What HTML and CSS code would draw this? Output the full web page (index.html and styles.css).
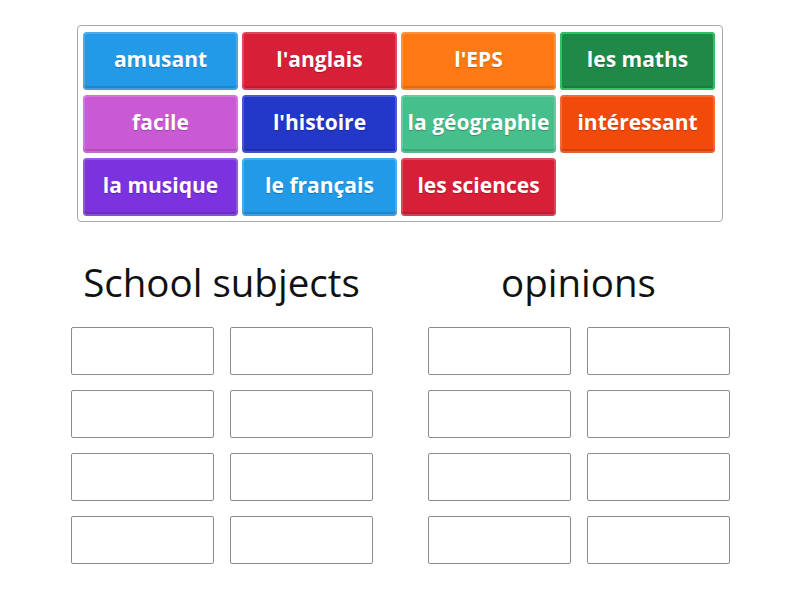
FILE: index.html
```html
<!DOCTYPE html>
<html>
<head>
  <title>Group sort</title>
  <link rel="stylesheet" href="styles.css">
</head>
<body>
  <div class="cards">
    <div class="card blue">amusant</div>
    <div class="card red">l'anglais</div>
    <div class="card orange">l'EPS</div>
    <div class="card green">les maths</div>
    <div class="card pink">facile</div>
    <div class="card navy">l'histoire</div>
    <div class="card mint">la géographie</div>
    <div class="card tomato">intéressant</div>
    <div class="card purple">la musique</div>
    <div class="card blue">le français</div>
    <div class="card red">les sciences</div>
  </div>

  <div class="groups">
    <div class="group">
      <h2>School subjects</h2>
      <div class="slots">
        <div class="slot"></div><div class="slot"></div>
        <div class="slot"></div><div class="slot"></div>
        <div class="slot"></div><div class="slot"></div>
        <div class="slot"></div><div class="slot"></div>
      </div>
    </div>
    <div class="group">
      <h2>opinions</h2>
      <div class="slots">
        <div class="slot"></div><div class="slot"></div>
        <div class="slot"></div><div class="slot"></div>
        <div class="slot"></div><div class="slot"></div>
        <div class="slot"></div><div class="slot"></div>
      </div>
    </div>
  </div>
</body>
</html>
```

FILE: styles.css
```css
body {
  margin: 0;
  background: #fff;
  font-family: "Open Sans", Arial, sans-serif;
}

.cards {
  box-sizing: border-box;
  width: 646px;
  height: 197px;
  margin: 25px auto 0;
  padding: 6px 5px 5px 5px;
  border: 1px solid #a8a8a8;
  border-radius: 4px;
  display: grid;
  grid-template-columns: repeat(4, 155px);
  grid-auto-rows: 58px;
  column-gap: 4px;
  row-gap: 5px;
}

.card {
  display: flex;
  align-items: center;
  justify-content: center;
  padding-bottom: 5px;
  border-radius: 4px;
  color: #fff;
  font-size: 21px;
  font-weight: bold;
  white-space: nowrap;
  text-shadow: 0 1px 1px rgba(0, 0, 0, 0.25);
  box-shadow: inset 0 0 0 2px rgba(255, 255, 255, 0.18), inset 0 -4px 0 rgba(0, 0, 0, 0.12);
}

.blue { background: #239ae8; }
.red { background: #d81f38; }
.orange { background: #ff7a14; }
.green { background: #1f8a48; box-shadow: inset 0 0 0 2px #2fc164, inset 0 -4px 0 rgba(0, 0, 0, 0.12); }
.pink { background: #c95ad4; }
.navy { background: #2337c8; }
.mint { background: #46bf8c; }
.tomato { background: #f24a0b; }
.purple { background: #7b33e0; }

.groups {
  display: flex;
  justify-content: center;
  gap: 55px;
  margin-top: 35px;
}

.group {
  width: 302px;
}

h2 {
  margin: 0 0 20px;
  height: 50px;
  line-height: 50px;
  text-align: center;
  font-size: 38.5px;
  font-weight: normal;
  color: #111;
}

.slots {
  display: grid;
  grid-template-columns: 143px 143px;
  grid-auto-rows: 48px;
  column-gap: 16px;
  row-gap: 15px;
}

.slot {
  border: 1px solid #8c8c8c;
  border-radius: 2px;
}
```
